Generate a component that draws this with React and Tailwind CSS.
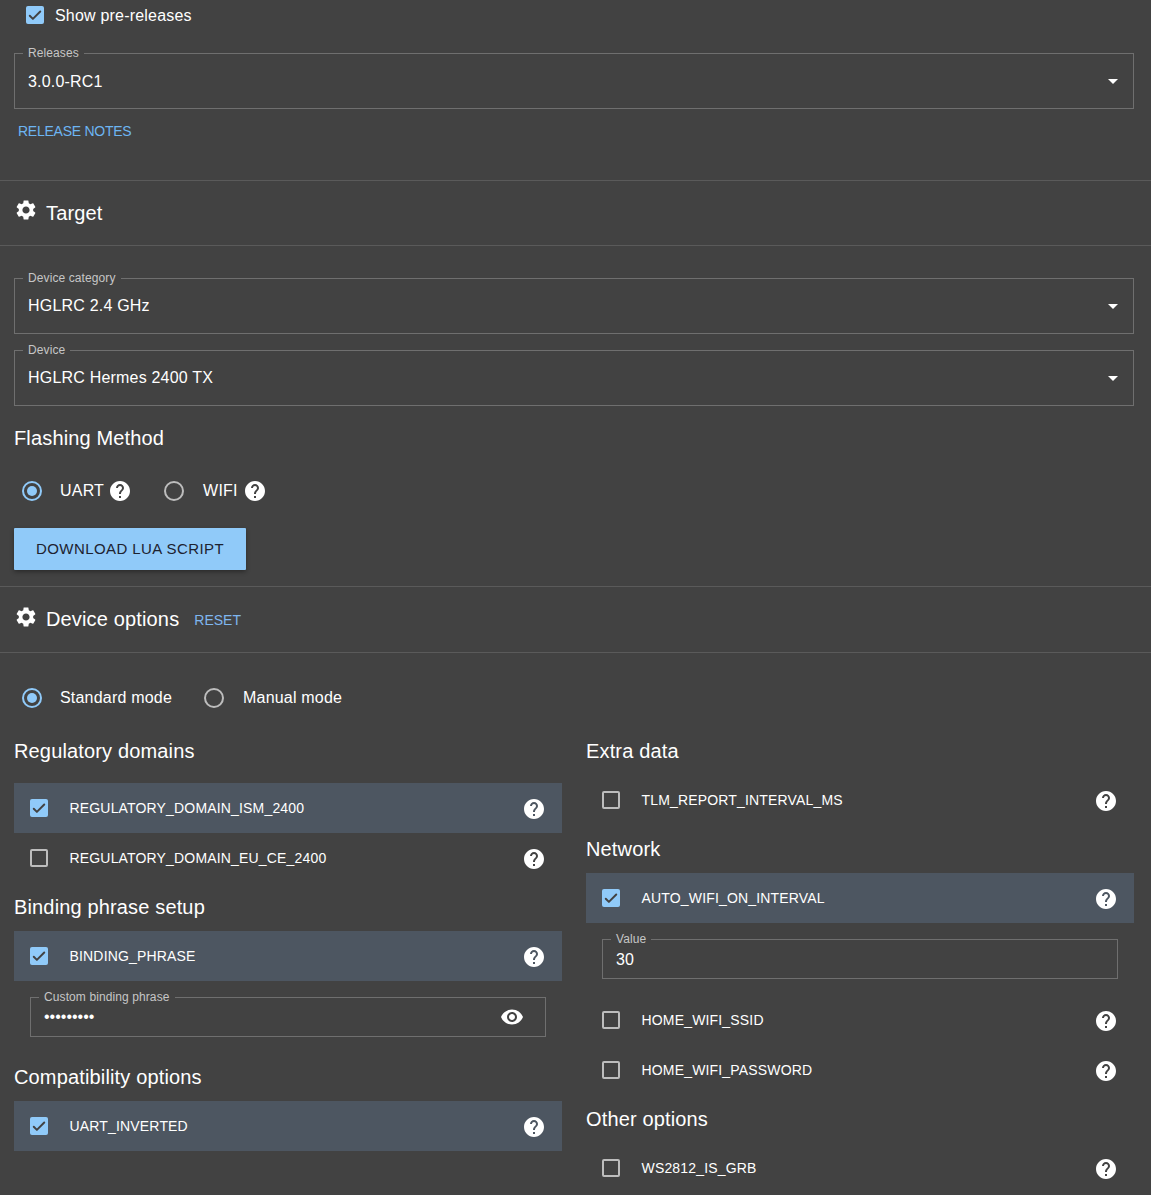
const FONT = "[font-family:'Liberation_Sans',Arial,sans-serif]";

function Check({ on }) {
  if (!on) return <span className="h-[18px] w-[18px] shrink-0 rounded-[2px] border-2 border-[#bdbdbd]" />;
  return (
    <span className="flex h-[18px] w-[18px] shrink-0 items-center justify-center rounded-[2px] bg-[#90caf9]">
      <svg viewBox="0 0 24 24" className="h-[18px] w-[18px]" fill="none" stroke="#424242" strokeWidth="2.6" strokeLinecap="round" strokeLinejoin="round">
        <path d="M5 13l4.2 4.2L19 7.4" />
      </svg>
    </span>
  );
}

function Radio({ on }) {
  return (
    <span className={`flex h-5 w-5 shrink-0 items-center justify-center rounded-full border-2 ${on ? "border-[#90caf9]" : "border-[#bdbdbd]"}`}>
      {on && <span className="h-[10px] w-[10px] rounded-full bg-[#90caf9]" />}
    </span>
  );
}

function Help() {
  return (
    <svg viewBox="0 0 24 24" className="h-6 w-6 shrink-0" fill="#fff">
      <path d="M12 2C6.48 2 2 6.48 2 12s4.48 10 10 10 10-4.48 10-10S17.52 2 12 2zm1 17h-2v-2h2v2zm2.07-7.75-.9.92C13.45 12.9 13 13.5 13 15h-2v-.5c0-1.1.45-2.1 1.17-2.83l1.24-1.26c.37-.36.59-.86.59-1.41 0-1.1-.9-2-2-2s-2 .9-2 2H8c0-2.21 1.79-4 4-4s4 1.79 4 4c0 .88-.36 1.68-.93 2.25z" />
    </svg>
  );
}

function Gear() {
  return (
    <svg viewBox="0 0 24 24" className="h-6 w-6 shrink-0" fill="#fff">
      <path d="M19.14 12.94c.04-.3.06-.61.06-.94 0-.32-.02-.64-.07-.94l2.03-1.58c.18-.14.23-.41.12-.61l-1.92-3.32c-.12-.22-.37-.29-.59-.22l-2.39.96c-.5-.38-1.03-.7-1.62-.94l-.36-2.54c-.04-.24-.24-.41-.48-.41h-3.84c-.24 0-.43.17-.47.41l-.36 2.54c-.59.24-1.13.57-1.62.94l-2.39-.96c-.22-.08-.47 0-.59.22L2.74 8.87c-.12.21-.08.47.12.61l2.03 1.58c-.05.3-.09.63-.09.94s.02.64.07.94l-2.03 1.58c-.18.14-.23.41-.12.61l1.92 3.32c.12.22.37.29.59.22l2.39-.96c.5.38 1.03.7 1.62.94l.36 2.54c.05.24.24.41.48.41h3.84c.24 0 .44-.17.47-.41l.36-2.54c.59-.24 1.13-.56 1.62-.94l2.39.96c.22.08.47 0 .59-.22l1.92-3.32c.12-.22.07-.47-.12-.61l-2.01-1.58zM12 15.6c-1.98 0-3.6-1.62-3.6-3.6s1.62-3.6 3.6-3.6 3.6 1.62 3.6 3.6-1.62 3.6-3.6 3.6z" />
    </svg>
  );
}

function Field({ label, value, arrow, height, valueClass = "" }) {
  return (
    <div className={`relative flex items-center border border-[#6f6f6f] px-[13px] ${height}`}>
      <span className="absolute left-[8px] top-[-8px] bg-[#424242] px-[5px] text-xs leading-[14px] tracking-[0.1px] text-[#c6c6c6]">{label}</span>
      <span className={`flex-1 ${valueClass}`}>{value}</span>
      {arrow && (
        <svg viewBox="0 0 24 24" className="mr-[-5px] h-6 w-6" fill="#fff">
          <path d="M7 10l5 5 5-5z" />
        </svg>
      )}
    </div>
  );
}

function Option({ label, on, active }) {
  return (
    <div className={`flex h-[50px] items-center px-4 ${active ? "bg-[#4d5661]" : ""}`}>
      <Check on={on} />
      <span className="ml-[21.5px] flex-1 text-sm tracking-[0.17px]">{label}</span>
      <span className="mt-0.5"><Help /></span>
    </div>
  );
}

function Heading({ children, className = "" }) {
  return <h6 className={`text-xl leading-6 tracking-[0.15px] ${className}`}>{children}</h6>;
}

function Section({ title, extra, height }) {
  return (
    <div className={`flex items-center border-y border-[#5a5a5a] pl-[14px] ${height}`}>
      <span className="mt-[-6px]"><Gear /></span>
      <span className="mb-px ml-[8px] text-xl tracking-[0.15px]">{title}</span>
      {extra}
    </div>
  );
}

export default function App() {
  return (
    <div className={`h-[1195px] overflow-hidden bg-[#424242] text-white ${FONT} text-base tracking-[0.2px]`}>
      <div className="flex h-[30px] items-center pl-[26px]">
        <Check on />
        <span className="ml-[11px] mt-px">Show pre-releases</span>
      </div>

      <div className="pl-[14px] pr-[17px] pt-[23px]">
        <Field label="Releases" value="3.0.0-RC1" arrow height="h-[56px]" valueClass="mt-px" />
        <div className="mt-[14px] pl-1 text-sm leading-[16px] tracking-[-0.25px] text-[#6db5f2]">RELEASE NOTES</div>
      </div>

      <div className="mt-[41px]">
        <Section title="Target" height="h-[66px]" />
      </div>

      <div className="flex flex-col gap-4 pl-[14px] pr-[17px] pt-[32px]">
        <Field label="Device category" value="HGLRC 2.4 GHz" arrow height="h-[56px]" />
        <Field label="Device" value="HGLRC Hermes 2400 TX" arrow height="h-[56px]" />
      </div>

      <div className="px-[14px]">
        <Heading className="mt-5">Flashing Method</Heading>
        <div className="mt-[29px] flex h-6 items-center pl-2">
          <Radio on />
          <span className="ml-[18px]">UART</span>
          <span className="ml-[4px]"><Help /></span>
          <span className="ml-[32px]"><Radio /></span>
          <span className="ml-[19px]">WIFI</span>
          <span className="ml-[5px]"><Help /></span>
        </div>
        <button className="mt-[25px] h-[42px] w-[232px] rounded-[1px] bg-[#90caf9] text-[15px] tracking-[0.42px] text-[#1d2230] shadow-[0_2px_4px_rgba(0,0,0,0.35)]">
          DOWNLOAD LUA SCRIPT
        </button>
      </div>

      <div className="mt-4">
        <Section
          title="Device options"
          height="h-[67px]"
          extra={<span className="ml-[15px] text-sm tracking-normal text-[#7fb6ee]">RESET</span>}
        />
      </div>

      <div className="mt-[33px] flex h-6 items-center pl-[22px]">
        <Radio on />
        <span className="ml-[18px]">Standard mode</span>
        <span className="ml-[32px]"><Radio /></span>
        <span className="ml-[19px]">Manual mode</span>
      </div>

      <div className="mt-[29px] grid grid-cols-2 gap-6 pl-[14px] pr-[17px]">
        <div>
          <Heading className="mb-5">Regulatory domains</Heading>
          <Option label="REGULATORY_DOMAIN_ISM_2400" on active />
          <Option label="REGULATORY_DOMAIN_EU_CE_2400" />
          <Heading className="mb-3 mt-3">Binding phrase setup</Heading>
          <Option label="BINDING_PHRASE" on active />
          <div className="px-4 pt-4">
            <Field
              label="Custom binding phrase"
              value={<span className="tracking-normal">•••••••••</span>}
              height="h-[40px]"
            />
            <svg viewBox="0 0 24 24" className="relative ml-auto mr-[22px] mt-[-32px] h-6 w-6" fill="#fff">
              <path d="M12 4.5C7 4.5 2.73 7.61 1 12c1.73 4.39 6 7.5 11 7.5s9.27-3.11 11-7.5c-1.73-4.39-6-7.5-11-7.5zM12 17c-2.76 0-5-2.24-5-5s2.24-5 5-5 5 2.24 5 5-2.24 5-5 5zm0-8c-1.66 0-3 1.34-3 3s1.34 3 3 3 3-1.34 3-3-1.34-3-3-3z" />
            </svg>
          </div>
          <Heading className="mb-3 mt-[36px]">Compatibility options</Heading>
          <Option label="UART_INVERTED" on active />
        </div>

        <div>
          <Heading className="mb-3">Extra data</Heading>
          <Option label="TLM_REPORT_INTERVAL_MS" />
          <Heading className="mb-3 mt-3">Network</Heading>
          <Option label="AUTO_WIFI_ON_INTERVAL" on active />
          <div className="px-4 py-4">
            <Field label="Value" value="30" height="h-[40px]" valueClass="mt-px" />
          </div>
          <Option label="HOME_WIFI_SSID" />
          <Option label="HOME_WIFI_PASSWORD" />
          <Heading className="mb-3 mt-3">Other options</Heading>
          <Option label="WS2812_IS_GRB" />
        </div>
      </div>
    </div>
  );
}
